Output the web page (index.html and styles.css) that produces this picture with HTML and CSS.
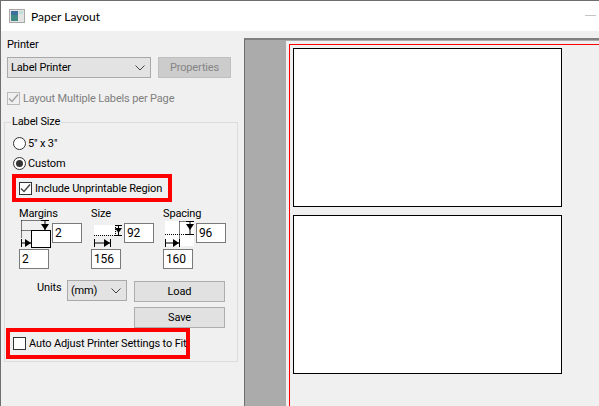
FILE: index.html
```html
<!DOCTYPE html>
<html>
<head>
<meta charset="utf-8">
<title>Paper Layout</title>
<link rel="stylesheet" href="styles.css">
</head>
<body>
<div class="window">
  <header class="titlebar">
    <svg class="appicon" width="16" height="16" viewBox="0 0 16 16"><rect x="0.5" y="1.5" width="15" height="13" fill="#e4e4e4" stroke="#a8a8a8"/><rect x="2" y="3" width="7" height="10" fill="#3f8a84"/><rect x="2" y="3" width="7" height="4" fill="#3c6f9c"/><rect x="10" y="3" width="4" height="3" fill="#bfe0d6"/></svg>
    <span>Paper Layout</span>
    <i class="minimize"></i>
  </header>
  <main class="content">
    <section class="side">
      <div class="label printer-label">Printer</div>
      <div class="printer-row">
        <div class="select printer-select"><span>Label Printer</span><svg width="10" height="6" viewBox="0 0 10 6"><path d="M0.5 0.5 5 5 9.500 0.500" fill="none" stroke="#444" stroke-width="1"/></svg></div>
        <div class="btn disabled props">Properties</div>
      </div>
      <div class="check disabled-check"><span class="box dim"><svg width="13" height="13" viewBox="0 0 13 13"><path d="M2 6.500 5 9.500 11 2.500" fill="none" stroke="#a0a0a0" stroke-width="1.400"/></svg></span>Layout Multiple Labels per Page</div>
      <fieldset class="group">
        <legend>Label Size</legend>
        <div class="radio r1"><span class="dot"></span>5" x 3"</div>
        <div class="radio r2"><span class="dot on"></span>Custom</div>
        <div class="check outlined incl"><span class="box"><svg width="13" height="13" viewBox="0 0 13 13"><path d="M2 6.500 5 9.500 11 2.500" fill="none" stroke="#444" stroke-width="1.400"/></svg></span>Include Unprintable Region</div>
        <div class="dims">
          <div class="dim-col">
            <div class="label">Margins</div>
            <div class="dim-mid">
              <svg class="diagram d-margins" width="30" height="28" viewBox="0 0 30 28">
                <path d="M0.500 0.500H20M0.500 0.500V18M0.500 10.500H10" fill="none" stroke="#000" stroke-dasharray="1 1"/>
                <rect x="10.500" y="10.500" width="19" height="17" fill="#fff" stroke="#000"/>
                <path d="M20 0.500H28M24 0.500V10" stroke="#000" fill="none"/><path d="M20 4 28 4 24 10Z"/>
                <path d="M0.500 19V27M0.500 23H10" stroke="#000" fill="none"/><path d="M4 19 10 23 4 27Z"/>
              </svg>
              <div class="input">2</div>
            </div>
            <div class="input">2</div>
          </div>
          <div class="dim-col">
            <div class="label">Size</div>
            <div class="dim-mid">
              <svg class="diagram d-size" width="29" height="28" viewBox="0 0 29 28">
                <rect y="5" width="21" height="10" fill="#fff"/>
                <path d="M0 15.500H21M21.500 5V15" fill="none" stroke="#000" stroke-dasharray="1 1"/>
                <path d="M21 5.500H28M24.500 5.500V15M21 15.500H28" stroke="#000" fill="none"/><path d="M21 8 28 8 24.500 13Z"/>
                <path d="M0.500 19V27M0.500 23H16M16.500 19V27" stroke="#000" fill="none"/><path d="M10 19 16 23 10 27Z"/>
              </svg>
              <div class="input">92</div>
            </div>
            <div class="input">156</div>
          </div>
          <div class="dim-col">
            <div class="label">Spacing</div>
            <div class="dim-mid">
              <svg class="diagram d-spacing" width="30" height="28" viewBox="0 0 30 28">
                <rect y="1" width="29" height="25" fill="#fff"/>
                <path d="M14.500 1.500H29M0 14.500H29M14.500 1.500V26" fill="none" stroke="#000" stroke-dasharray="1 1"/>
                <path d="M21 1.500H29M25 1.500V14M21 14.500H29" stroke="#000" fill="none"/><path d="M21 4 29 4 25 10Z"/>
                <path d="M0.500 19V27M0.500 23H14M14.500 19V27" stroke="#000" fill="none"/><path d="M8 19 14 23 8 27Z"/>
              </svg>
              <div class="input">96</div>
            </div>
            <div class="input">160</div>
          </div>
        </div>
        <div class="units-row">
          <div class="label units-label">Units</div>
          <div class="select units-select"><span>(mm)</span><svg width="10" height="6" viewBox="0 0 10 6"><path d="M0.500 0.500 5 5 9.500 0.500" fill="none" stroke="#444"/></svg></div>
          <div class="btn-stack"><div class="btn">Load</div><div class="btn">Save</div></div>
        </div>
        <div class="check outlined auto"><span class="box"></span>Auto Adjust Printer Settings to Fit</div>
      </fieldset>
    </section>
    <section class="preview">
      <div class="sheet">
        <div class="printable">
          <div class="paper-label"></div>
          <div class="paper-label"></div>
        </div>
      </div>
    </section>
  </main>
</div>
</body>
</html>
```

FILE: styles.css
```css
* { box-sizing: border-box; }
html, body { margin: 0; padding: 0; }
body { width: 599px; height: 406px; overflow: hidden; font-family: Roboto, "Liberation Sans", sans-serif; font-size: 11px; letter-spacing: -0.15px; color: #000; }
.window { width: 599px; height: 406px; display: flex; flex-direction: column; border-top: 1px solid #6e6e6e; border-left: 1px solid #6e6e6e; background: #f0f0f0; }
.titlebar { height: 30px; flex: none; background: #fff; display: flex; align-items: center; padding-left: 8px; gap: 6px; font-family: Lato, sans-serif; font-size: 12px; letter-spacing: 0; position: relative; }
.minimize { position: absolute; right: 3px; top: 14px; width: 11px; height: 1px; background: #c4c4c4; }
.content { flex: 1; display: flex; min-height: 0; }
.side { width: 243px; flex: none; padding-left: 3px; position: relative; }
.label { line-height: 14px; white-space: nowrap; }
.printer-label { margin: 7px 0 0 3px; }
.printer-row { display: flex; gap: 7px; margin: 5px 0 0 3px; }
.select { border: 1px solid #a9a9a9; background: #e3e3e3; display: flex; align-items: center; justify-content: space-between; }
.printer-select { width: 144px; height: 21px; padding: 0 5px 0 3px; }
.btn { border: 1px solid #adadad; background: #e1e1e1; display: flex; align-items: center; justify-content: center; }
.btn.disabled { color: #858585; background: #cccccc; border-color: #bfbfbf; }
.props { width: 73px; height: 21px; }
.check { display: flex; align-items: center; gap: 3px; white-space: nowrap; }
.box { width: 13px; height: 13px; border: 1px solid #333; background: #fff; display: block; flex: none; position: relative; }
.box svg { position: absolute; left: -1px; top: -1px; }
.box.dim { border-color: #b9b9b9; background: #f0f0f0; }
.disabled-check { color: #7f7f7f; margin: 13px 0 0 3px; height: 14px; }
.group { position: relative; margin: 10px 0 0 0; padding: 0; width: 234px; height: 247px; border: 1px solid #dcdcdc; }
.group legend { padding: 0 1px; margin-left: 6px; line-height: 14px; }
.radio { display: flex; align-items: center; gap: 2px; margin-left: 8px; height: 14px; }
.r1 { margin-top: 7px; }
.r2 { margin-top: 6px; }
.dot { width: 13px; height: 13px; border: 1px solid #333; border-radius: 50%; background: #fff; display: block; position: relative; }
.dot.on::after { content: ""; position: absolute; inset: 2px; border-radius: 50%; background: #333; }
.outlined { border: 4px solid #ff0000; position: relative; }
.incl { width: 160px; height: 28px; margin: 4px 0 0 7px; padding-left: 3px; }
.dims { display: flex; margin: 6px 0 0 14px; }
.dim-col { width: 72px; }
.dim-col .label { height: 12px; line-height: 12px; }
.dim-mid { display: flex; height: 26px; align-items: flex-start; }
.diagram { flex: none; display: block; }
.d-margins, .d-spacing { margin-left: 2px; }
.d-size { margin-left: 3px; }
.dim-mid .input { margin: 3px 0 0 1px; flex: none; }
.input { width: 30px; height: 20px; border: 1px solid #7a7a7a; background: #fff; padding-left: 2px; line-height: 18px; margin-top: 3px; font-size: 12px; }
.units-row { display: flex; margin: 11px 0 0 32px; }
.units-label { width: 30px; margin-top: 1px; }
.units-select { width: 60px; height: 21px; padding: 0 5px 0 3px; }
.btn-stack { display: flex; flex-direction: column; gap: 5px; margin-left: 7px; margin-top: 1px; }
.btn-stack .btn { width: 91px; height: 21px; }
.auto { position: absolute; left: 1px; bottom: 2px; width: 184px; height: 31px; padding-left: 3px; }
.preview { flex: 1; background: #ababab; border-left: 1px solid #6e6e6e; border-top: 2px solid #808080; margin-top: 7px; padding: 1px 0 0 41px; overflow: hidden; }
.sheet { background: #f0f0f0; height: 100%; padding: 3px 0 0 3px; }
.printable { border-top: 1px solid #ff0000; border-left: 1px solid #ff0000; height: 100%; padding: 3px 0 0 3px; display: flex; flex-direction: column; gap: 8px; }
.paper-label { width: 269px; height: 159px; background: #fff; border: 1px solid #000; flex: none; }
```
